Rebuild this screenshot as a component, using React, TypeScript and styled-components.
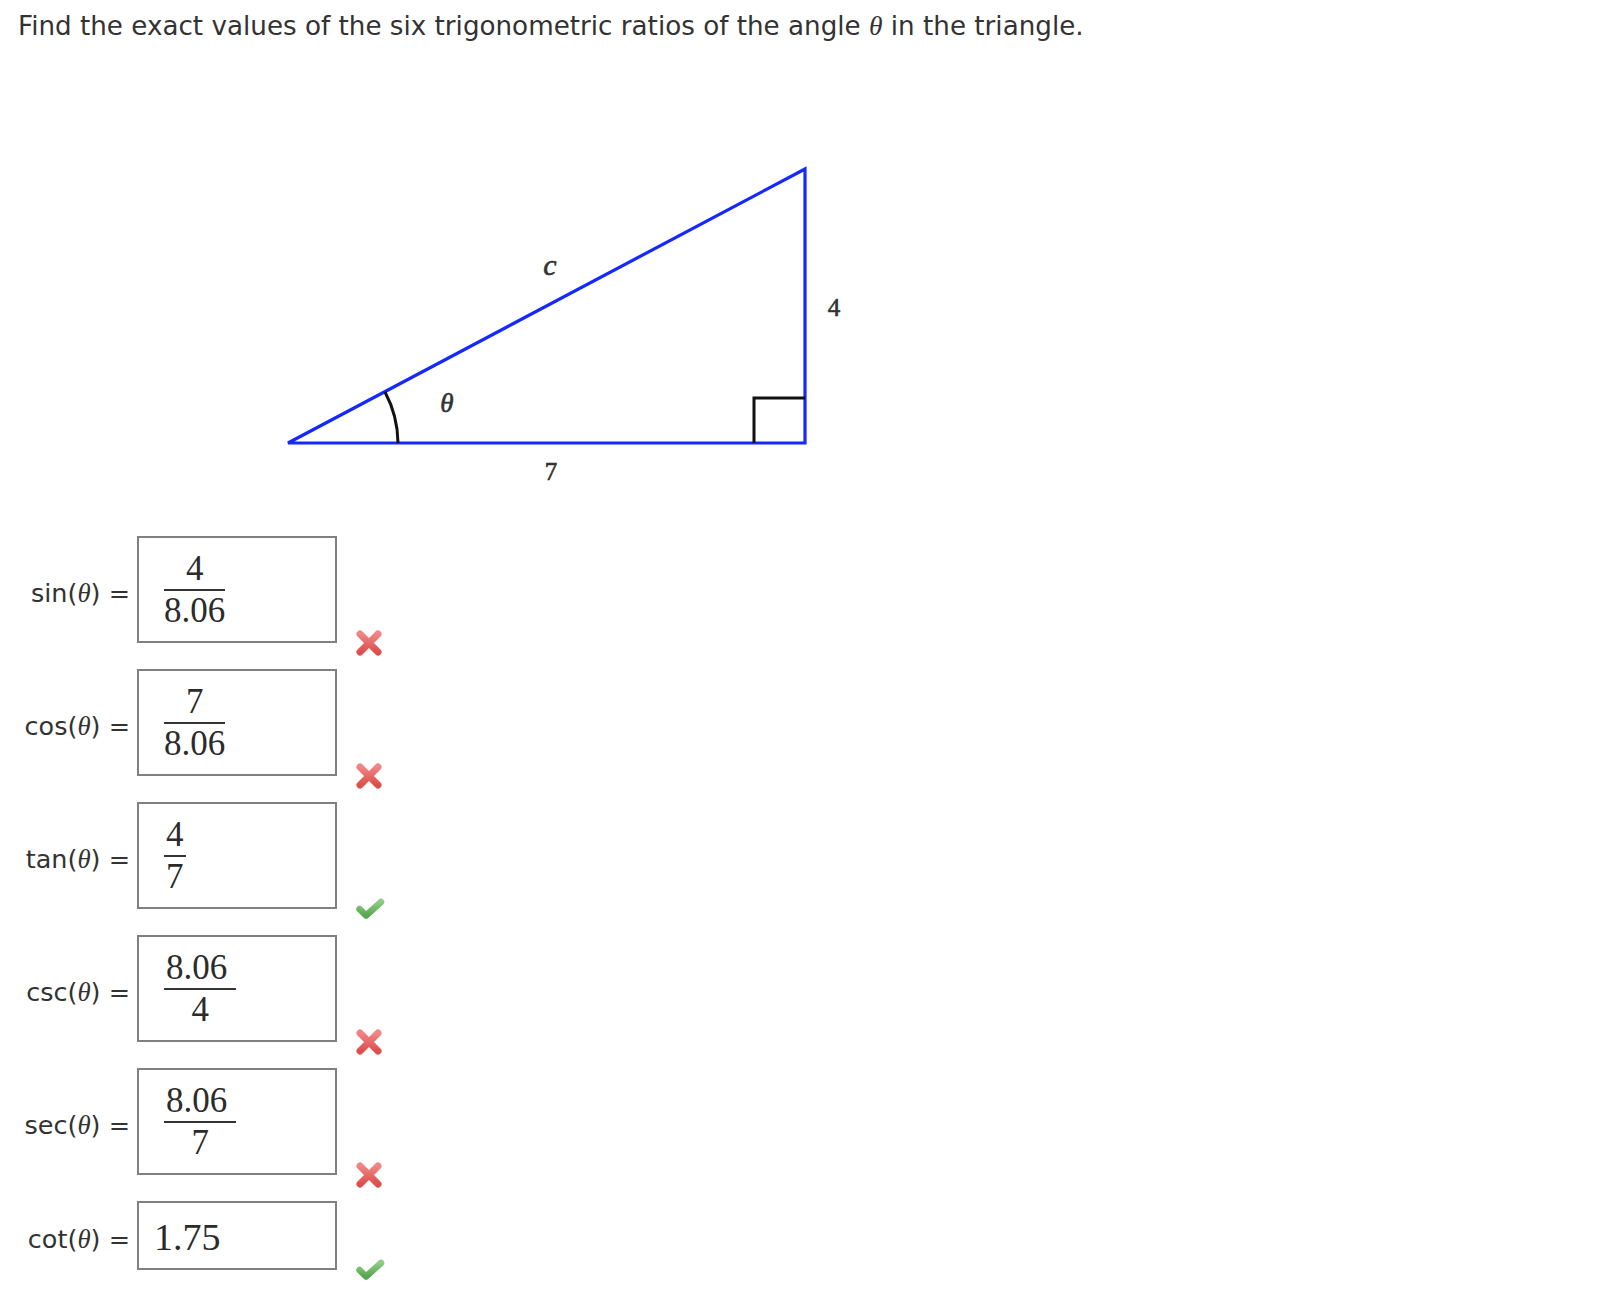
import { FC } from 'react';
import styled, { createGlobalStyle } from 'styled-components';

const GlobalStyle = createGlobalStyle`
  html, body {
    margin: 0;
    padding: 0;
    background: #fff;
  }
  body {
    font-family: 'DejaVu Sans', Verdana, sans-serif;
    color: #333;
  }
`;

const Page = styled.div`
  width: 1607px;
  min-height: 1303px;
`;

const Title = styled.p`
  margin: 0;
  padding: 11px 0 0 18px;
  font-size: 26.2px;
  line-height: 30px;
  color: #333;
`;

const Theta = styled.span`
  font-family: 'Liberation Serif', 'Times New Roman', serif;
  font-style: italic;
  font-size: 1.05em;
`;

const Figure = styled.svg`
  display: block;
  margin-top: 19px;
`;

const Rows = styled.div`
  margin-top: 36px;
  display: flex;
  flex-direction: column;
  gap: 26px;
`;

const Row = styled.div`
  display: flex;
  align-items: center;
`;

const Label = styled.div`
  width: 130px;
  text-align: right;
  font-size: 25.5px;
  padding-top: 8px;
  white-space: nowrap;
  color: #333;
`;

const AnswerBox = styled.div<{ $short?: boolean }>`
  box-sizing: border-box;
  width: 200px;
  height: ${(p) => (p.$short ? '69px' : '107px')};
  margin-left: 7px;
  border: 2px solid #808080;
  display: flex;
  align-items: center;
  padding-left: ${(p) => (p.$short ? '15px' : '25px')};
  font-family: 'Liberation Serif', 'Times New Roman', serif;
  color: #2b2b2b;
`;

const Frac = styled.span`
  display: inline-flex;
  flex-direction: column;
  align-items: center;
  font-size: 35px;
  line-height: 1;
`;

const Num = styled.span<{ $pad?: number }>`
  padding: 0 ${(p) => p.$pad ?? 2}px 3px 2px;
  align-self: stretch;
  text-align: center;
`;

const Bar = styled.span`
  align-self: stretch;
  border-top: 2px solid #333;
`;

const Den = styled.span`
  padding-top: 2px;
`;

const Plain = styled.span`
  font-size: 38px;
  line-height: 1;
  padding-top: 2px;
`;

const Mark = styled.div<{ $ok: boolean }>`
  align-self: flex-end;
  margin-left: 18px;
  margin-bottom: ${(p) => (p.$ok ? '-11px' : '-14px')};
  display: flex;
`;

const Cross: FC = () => (
  <svg width="28" height="28" viewBox="0 0 28 28">
    <defs>
      <linearGradient id="xg" x1="0" y1="0" x2="0" y2="1">
        <stop offset="0" stopColor="#f08583" />
        <stop offset="1" stopColor="#dc4f4d" />
      </linearGradient>
    </defs>
    <path
      d="M5 5 L23 23 M23 5 L5 23"
      stroke="url(#xg)"
      strokeWidth="7"
      strokeLinecap="round"
      fill="none"
    />
  </svg>
);

const Check: FC = () => (
  <svg width="30" height="22" viewBox="0 0 30 22">
    <defs>
      <linearGradient id="cg" x1="0" y1="0" x2="0" y2="1">
        <stop offset="0" stopColor="#8ccd80" />
        <stop offset="1" stopColor="#58a650" />
      </linearGradient>
    </defs>
    <path
      d="M4.5 11 L11 17.5 L26 4"
      stroke="url(#cg)"
      strokeWidth="6.5"
      strokeLinecap="round"
      strokeLinejoin="round"
      fill="none"
    />
  </svg>
);

interface Answer {
  fn: string;
  num?: string;
  den?: string;
  value?: string;
  ok: boolean;
  pad?: number;
}

const answers: Answer[] = [
  { fn: 'sin', num: '4', den: '8.06', ok: false },
  { fn: 'cos', num: '7', den: '8.06', ok: false },
  { fn: 'tan', num: '4', den: '7', ok: true },
  { fn: 'csc', num: '8.06', den: '4', ok: false, pad: 9 },
  { fn: 'sec', num: '8.06', den: '7', ok: false, pad: 9 },
  { fn: 'cot', value: '1.75', ok: true },
];

const Triangle: FC = () => (
  <Figure width="900" height="440" viewBox="0 60 900 440">
    <polygon
      points="288,443 805,169 805,443"
      fill="none"
      stroke="#1428ff"
      strokeWidth="3.2"
      strokeLinejoin="miter"
    />
    <path d="M754 443 L754 398 L805 398" fill="none" stroke="#111" strokeWidth="3" />
    <path d="M385 392 A110 110 0 0 1 398 443" fill="none" stroke="#111" strokeWidth="3" />
    <g
      fill="#333"
      stroke="#333"
      strokeWidth="0.6"
      fontFamily="'Liberation Serif', 'Times New Roman', serif"
    >
      <text x="550" y="275" fontSize="30" fontStyle="italic" textAnchor="middle">
        c
      </text>
      <text x="447" y="412" fontSize="27" fontStyle="italic" textAnchor="middle">
        θ
      </text>
      <text x="551" y="480" fontSize="25" textAnchor="middle">
        7
      </text>
      <text x="834" y="316" fontSize="25" textAnchor="middle">
        4
      </text>
    </g>
  </Figure>
);

const App: FC = () => {
  return (
    <Page>
      <GlobalStyle />
      <Title>
        Find the exact values of the six trigonometric ratios of the angle <Theta>θ</Theta> in
        the triangle.
      </Title>
      <Triangle />
      <Rows>
        {answers.map((a) => (
          <Row key={a.fn}>
            <Label>
              {a.fn}(<Theta>θ</Theta>) =
            </Label>
            <AnswerBox $short={!!a.value}>
              {a.value ? (
                <Plain>{a.value}</Plain>
              ) : (
                <Frac>
                  <Num $pad={a.pad}>{a.num}</Num>
                  <Bar />
                  <Den>{a.den}</Den>
                </Frac>
              )}
            </AnswerBox>
            <Mark $ok={a.ok}>{a.ok ? <Check /> : <Cross />}</Mark>
          </Row>
        ))}
      </Rows>
    </Page>
  );
};

export default App;
